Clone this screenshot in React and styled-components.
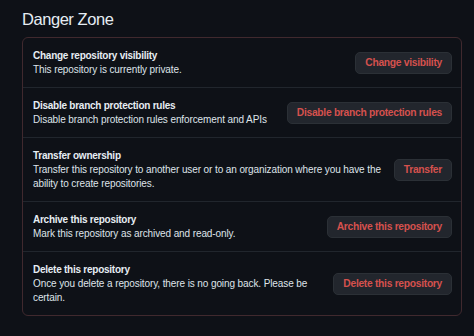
import React from 'react';
import styled, { createGlobalStyle } from 'styled-components';

const GlobalStyle = createGlobalStyle`
  html, body {
    margin: 0;
    padding: 0;
    background: #0e1117;
  }
  body {
    font-family: "Liberation Sans", Arial, sans-serif;
    color: #e6edf3;
  }
`;

const Page = styled.div`
  width: 474px;
  height: 336px;
  box-sizing: border-box;
  padding: 9px 12px 0 22px;
  background: #0e1117;
`;

const Heading = styled.h2`
  margin: 0 0 8px;
  font-size: 16.5px;
  font-weight: 400;
  letter-spacing: -0.45px;
  line-height: 20px;
  color: #e6edf3;
`;

const Box = styled.div`
  border: 1px solid #40292e;
  border-radius: 6px;
  display: flex;
  flex-direction: column;
`;

const Row = styled.div`
  display: flex;
  align-items: center;
  gap: 12px;
  padding: 10px 9px 10px 10px;
  border-top: ${(p) => (p.$first ? 'none' : '1px solid #21262d')};
`;

const Info = styled.div`
  flex: 1;
  min-width: 0;
`;

const Title = styled.div`
  font-size: 10px;
  font-weight: 700;
  letter-spacing: -0.25px;
  line-height: 15px;
  color: #e6edf3;
`;

const Desc = styled.div`
  font-size: 10px;
  letter-spacing: -0.1px;
  line-height: 14px;
  color: #dfe4ea;
`;

const DangerButton = styled.button`
  flex-shrink: 0;
  height: 22px;
  padding: 0 9px;
  font-family: inherit;
  font-size: 10.3px;
  font-weight: 700;
  letter-spacing: -0.3px;
  color: #d5514d;
  background: #22262d;
  border: 1px solid #2b3036;
  border-radius: 5px;
  cursor: pointer;
`;

const items = [
  {
    title: 'Change repository visibility',
    desc: 'This repository is currently private.',
    action: 'Change visibility',
  },
  {
    title: 'Disable branch protection rules',
    desc: 'Disable branch protection rules enforcement and APIs',
    action: 'Disable branch protection rules',
  },
  {
    title: 'Transfer ownership',
    desc: 'Transfer this repository to another user or to an organization where you have the ability to create repositories.',
    action: 'Transfer',
  },
  {
    title: 'Archive this repository',
    desc: 'Mark this repository as archived and read-only.',
    action: 'Archive this repository',
  },
  {
    title: 'Delete this repository',
    desc: 'Once you delete a repository, there is no going back. Please be certain.',
    action: 'Delete this repository',
  },
];

export default function App() {
  return (
    <>
      <GlobalStyle />
      <Page>
        <Heading>Danger Zone</Heading>
        <Box>
          {items.map((item, i) => (
            <Row key={item.title} $first={i === 0}>
              <Info>
                <Title>{item.title}</Title>
                <Desc>{item.desc}</Desc>
              </Info>
              <DangerButton>{item.action}</DangerButton>
            </Row>
          ))}
        </Box>
      </Page>
    </>
  );
}
